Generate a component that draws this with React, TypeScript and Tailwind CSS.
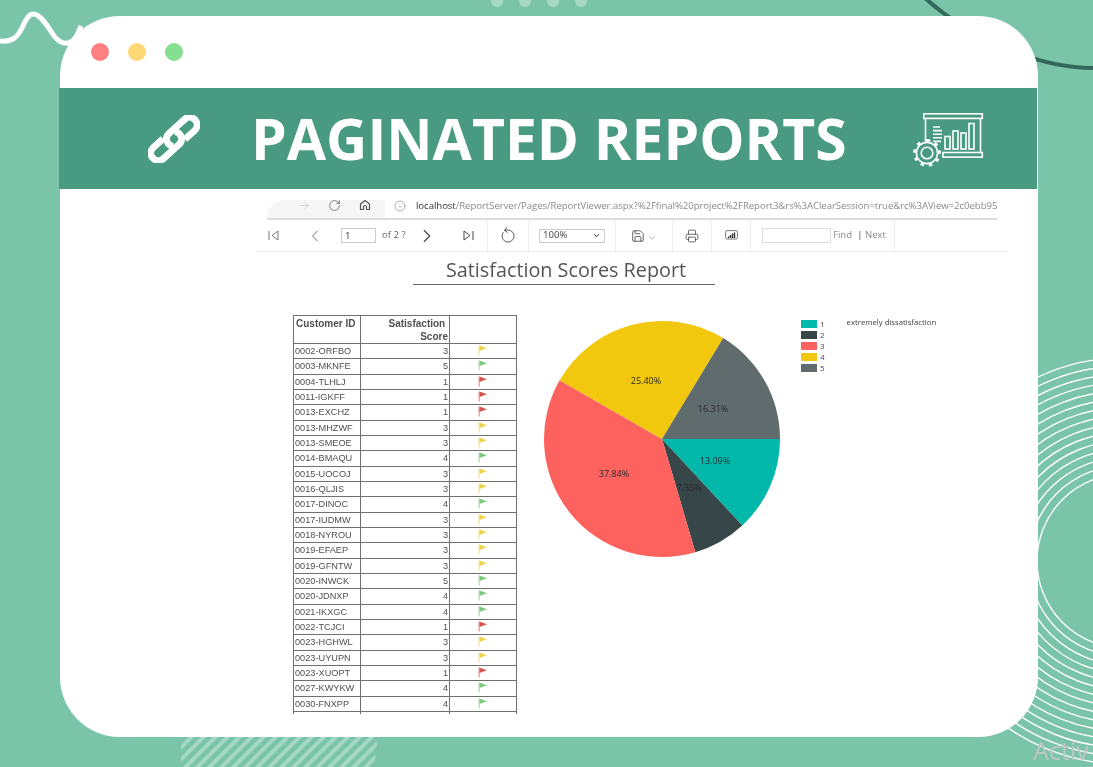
/**
 * Paginated Reports slide - report viewer screenshot inside a white window card
 */

import { ArrowRight, ChevronDown, ChevronLeft, ChevronRight, Info, Printer, RotateCcw, RotateCw, Save } from 'lucide-react';

const rows: [string, number][] = [
  ['0002-ORFBO', 3],
  ['0003-MKNFE', 5],
  ['0004-TLHLJ', 1],
  ['0011-IGKFF', 1],
  ['0013-EXCHZ', 1],
  ['0013-MHZWF', 3],
  ['0013-SMEOE', 3],
  ['0014-BMAQU', 4],
  ['0015-UOCOJ', 3],
  ['0016-QLJIS', 3],
  ['0017-DINOC', 4],
  ['0017-IUDMW', 3],
  ['0018-NYROU', 3],
  ['0019-EFAEP', 3],
  ['0019-GFNTW', 3],
  ['0020-INWCK', 5],
  ['0020-JDNXP', 4],
  ['0021-IKXGC', 4],
  ['0022-TCJCI', 1],
  ['0023-HGHWL', 3],
  ['0023-UYUPN', 3],
  ['0023-XUOPT', 1],
  ['0027-KWYKW', 4],
  ['0030-FNXPP', 4],
];

const slices = [
  { label: '1', pct: 13.09, color: '#01b8aa', text: '13.09%', tx: 53, ty: 23 },
  { label: '2', pct: 7.35, color: '#374649', text: '7.35%', tx: 27, ty: 50 },
  { label: '3', pct: 37.84, color: '#fd625e', text: '37.84%', tx: -48, ty: 36 },
  { label: '4', pct: 25.4, color: '#f2c80f', text: '25.40%', tx: -16, ty: -57 },
  { label: '5', pct: 16.31, color: '#5f6b6d', text: '16.31%', tx: 51, ty: -29 },
];

function slicePath(startPct: number, pct: number, r: number) {
  const a0 = (startPct / 100) * Math.PI * 2;
  const a1 = ((startPct + pct) / 100) * Math.PI * 2;
  const large = pct > 50 ? 1 : 0;
  return `M0 0 L${r * Math.cos(a0)} ${r * Math.sin(a0)} A${r} ${r} 0 ${large} 1 ${r * Math.cos(a1)} ${r * Math.sin(a1)} Z`;
}

function Flag({ score }: { score: number }) {
  const color = score === 1 ? '#d9534f' : score === 3 ? '#ecd54e' : '#7fc97f';
  return (
    <svg width="10" height="11" viewBox="0 0 10 11">
      <rect x="0.5" y="0.5" width="1.3" height="10" fill={color} opacity="0.6" />
      <path d="M1.5 0.5 L9 3.2 L1.5 6 Z" fill={color} />
    </svg>
  );
}

function Backdrop() {
  const rings = Array.from({ length: 15 }, (_, i) => 87 + i * 8.3);
  return (
    <svg className="absolute inset-0" width="1093" height="767" viewBox="0 0 1093 767">
      <defs>
        <pattern id="stripes" width="8.5" height="8.5" patternUnits="userSpaceOnUse" patternTransform="rotate(45)">
          <rect width="4" height="8.5" fill="#a5d9c6" />
        </pattern>
      </defs>
      {[497, 525, 553, 581].map((x) => (
        <circle key={x} cx={x} cy="1" r="6" fill="#a8d9c7" />
      ))}
      <path d="M925 -2 C960 30 1030 68 1093 68" fill="none" stroke="#33695a" strokeWidth="4" />
      {rings.map((r) => (
        <circle key={r} cx="1124" cy="561" r={r} fill="none" stroke="#ffffff" strokeWidth="1.4" />
      ))}
      <path d="M181 737 H378 L374 767 H181 Z" fill="url(#stripes)" />
    </svg>
  );
}

function LinkIcon() {
  return (
    <svg width="52" height="48" viewBox="-26 -24 52 48" fill="none" stroke="#ffffff" strokeWidth="6.8" className="shrink-0">
      <g transform="rotate(-42)">
        <path d="M-8 -7.5 H-21 A7.5 7.5 0 0 0 -21 7.5 H0 A7.5 7.5 0 0 0 5.5 -5" />
        <path d="M8 7.5 H21 A7.5 7.5 0 0 0 21 -7.5 H0 A7.5 7.5 0 0 0 -5.5 5" />
      </g>
    </svg>
  );
}

function ReportIcon() {
  return (
    <svg width="72" height="56" viewBox="0 0 72 56" fill="none" stroke="#ffffff" strokeWidth="1.6">
      <rect x="10.8" y="1.8" width="58.5" height="4.6" />
      <path d="M12.5 6.4 V28 M67.5 6.4 V40.5" />
      <rect x="30" y="40.5" width="39.3" height="4.6" />
      <path d="M20 15 H27 M20 18.6 H29 M20 22.2 H29 M20 25.8 H29 M20 29.4 H28" />
      <rect x="32" y="24.5" width="5" height="12.5" />
      <rect x="40" y="19" width="5" height="18" />
      <rect x="48" y="21" width="5" height="16" />
      <rect x="56" y="11.5" width="5" height="25.5" />
      <circle cx="14" cy="41" r="5.8" />
      <circle cx="14" cy="41" r="10.6" />
      <path strokeWidth="3" strokeDasharray="3.4 4.9" d="M14 28.6 A12.4 12.4 0 1 1 13.99 28.6" />
    </svg>
  );
}

function FirstIcon() {
  return (
    <svg width="11" height="11" viewBox="0 0 11 11" fill="none" stroke="#777777" strokeWidth="1">
      <path d="M1 1 V10 M10 1 L4 5.5 L10 10 Z" />
    </svg>
  );
}

function LastIcon() {
  return (
    <svg width="11" height="11" viewBox="0 0 11 11" fill="none" stroke="#444444" strokeWidth="1">
      <path d="M10 1 V10 M1 1 L7 5.5 L1 10 Z" />
    </svg>
  );
}

function HomeIcon() {
  return (
    <svg width="12" height="12" viewBox="0 0 12 12" fill="none" stroke="#555555" strokeWidth="1.2">
      <path d="M1.5 10.5 V5 L6 1.5 L10.5 5 V10.5 H7.5 V8 A1.5 1.5 0 0 0 4.5 8 V10.5 Z" strokeLinejoin="round" />
    </svg>
  );
}

function ChartIcon() {
  return (
    <svg width="13" height="11" viewBox="0 0 13 11" fill="none">
      <rect x="0.6" y="0.6" width="11.8" height="8.4" rx="1.5" stroke="#777777" />
      <path d="M3.5 8 V6.5 M5.5 8 V5 M7.5 8 V3.5 M9.5 8 V2.5" stroke="#333333" strokeWidth="1.4" />
    </svg>
  );
}

function BrowserBar() {
  return (
    <div className="ml-[9px] w-[730px] h-[20px] flex border-b-2 border-[#dcdcdc] overflow-hidden">
      <div className="w-[118px] h-[18px] rounded-tl-[30px] bg-[#f6f6f6] flex items-start shrink-0">
        <ArrowRight size={13} strokeWidth={1.2} className="ml-[31px] -mt-[1px] text-[#c4c4c4]" />
        <RotateCw size={13} strokeWidth={1.3} className="ml-[17px] -mt-[1px] text-[#555555]" />
        <span className="ml-[18px] -mt-[1px]">
          <HomeIcon />
        </span>
      </div>
      <div className="flex-1 flex items-start min-w-0">
        <Info size={12} strokeWidth={1} className="ml-[9px] text-[#666666] shrink-0" />
        <span className="ml-[10px] -mt-[1px] leading-[13px] font-['Open_Sans',sans-serif] text-[9.6px] tracking-[-0.05px] whitespace-nowrap text-[#8a8a8a]">
          <span className="text-[#333333]">localhost</span>
          /ReportServer/Pages/ReportViewer.aspx?%2Ffinal%20project%2FReport3&amp;rs%3AClearSession=true&amp;rc%3AView=2c0ebb95
        </span>
      </div>
    </div>
  );
}

function Toolbar() {
  const section = 'h-full flex items-center border-r border-[#eeeeee] shrink-0';
  return (
    <div className="w-[749px] h-[32px] flex border-b border-[#ececec] font-['Open_Sans',sans-serif] text-[9.6px] text-[#666666]">
      <div className={`${section} w-[230px]`}>
        <span className="ml-[10px]">
          <FirstIcon />
        </span>
        <ChevronLeft size={20} strokeWidth={1.1} className="ml-[26px] text-[#666666]" />
        <div className="ml-[16px] w-[35px] h-[15px] border border-[#cccccc] pl-[3px] leading-[13px] text-[#333333]">1</div>
        <span className="ml-[6px]">of 2 ?</span>
        <ChevronRight size={22} strokeWidth={1.2} className="ml-[10px] text-[#444444]" />
        <span className="ml-[25px]">
          <LastIcon />
        </span>
      </div>
      <div className={`${section} w-[41px] justify-center`}>
        <RotateCcw size={16} strokeWidth={1.2} className="rotate-[35deg] text-[#444444]" />
      </div>
      <div className={`${section} w-[87px] pl-[10px]`}>
        <div className="w-[66px] h-[14px] border border-[#cccccc] flex items-center justify-between px-[3px] text-[#444444]">
          <span>100%</span>
          <ChevronDown size={9} strokeWidth={2.5} className="text-[#222222]" />
        </div>
      </div>
      <div className={`${section} w-[57px] pl-[15px] gap-[2px]`}>
        <Save size={14} strokeWidth={1.4} className="text-[#444444]" />
        <ChevronDown size={10} strokeWidth={1.2} className="mt-[5px] text-[#666666]" />
      </div>
      <div className={`${section} w-[39px] justify-center`}>
        <Printer size={14} strokeWidth={1.3} className="text-[#444444]" />
      </div>
      <div className={`${section} w-[39px] justify-center`}>
        <ChartIcon />
      </div>
      <div className={`${section} w-[144px] pl-[11px]`}>
        <div className="w-[69px] h-[15px] border border-[#dddddd]" />
        <span className="ml-[2px] text-[#8a8a8a]">Find</span>
        <span className="ml-[5px] text-[#8a8a8a]">
          <span className="text-[#444444]">|</span> Next
        </span>
      </div>
    </div>
  );
}

function ScoreTable() {
  const line = 'border-[#707070]';
  return (
    <div className={`w-[224px] shrink-0 border-x ${line} font-['Liberation_Sans',sans-serif] text-[9.2px] text-[#505050]`}>
      <div className={`h-[29px] flex border-y ${line} font-bold text-[10px]`}>
        <div className={`w-[67px] border-r ${line} pl-[2px] pt-[2px] leading-[12px]`}>Customer ID</div>
        <div className={`w-[89px] border-r ${line} pr-[1px] pt-[1px] leading-[13px] text-right`}>
          Satisfaction&nbsp;
          <br />
          Score
        </div>
        <div className="flex-1" />
      </div>
      {rows.map(([id, score]) => (
        <div key={id} className={`h-[15.33px] flex items-center border-b ${line}`}>
          <div className={`w-[67px] h-full border-r ${line} pl-[1px] leading-[14px]`}>{id}</div>
          <div className={`w-[89px] h-full border-r ${line} pr-[1px] leading-[14px] text-right`}>{score}</div>
          <div className="flex-1 h-full flex items-center justify-center pb-[1px]">
            <Flag score={score} />
          </div>
        </div>
      ))}
      <div className="h-[2px] flex">
        <div className={`w-[67px] border-r ${line}`} />
        <div className={`w-[89px] border-r ${line}`} />
      </div>
    </div>
  );
}

function PieChart() {
  let start = 0;
  return (
    <svg width="240" height="238" viewBox="-120 -119 240 238" className="shrink-0">
      {slices.map((s) => {
        const d = slicePath(start, s.pct, 118);
        start += s.pct;
        return <path key={s.label} d={d} fill={s.color} />;
      })}
      {slices.map((s) => (
        <text
          key={s.label}
          x={s.tx}
          y={s.ty}
          textAnchor="middle"
          dominantBaseline="middle"
          fontFamily="Open Sans, sans-serif"
          fontSize="9"
          fill="#2a2a2a"
        >
          {s.text}
        </text>
      ))}
    </svg>
  );
}

function Legend() {
  return (
    <div className="flex font-['Open_Sans',sans-serif] text-[#444444]">
      <div className="flex flex-col gap-[3px] text-[8px]">
        {slices.map((s) => (
          <div key={s.label} className="h-[8px] flex items-center gap-[3px]">
            <span className="w-[16px] h-[8px]" style={{ backgroundColor: s.color }} />
            <span>{s.label}</span>
          </div>
        ))}
      </div>
      <div className="ml-[22px] -mt-[3px] text-[7.75px] whitespace-nowrap">extremely dissatisfaction</div>
    </div>
  );
}

export default function App() {
  return (
    <div className="relative w-[1093px] h-[767px] overflow-hidden bg-[#7ac4a9] pl-[60px] pt-[16px]">
      <Backdrop />

      <div className="relative w-[978px] h-[721px] rounded-[60px] bg-white">
        <div className="h-[72px] flex items-center pl-[31px] gap-[19px]">
          <span className="w-[18px] h-[18px] rounded-full bg-[#ff8080]" />
          <span className="w-[18px] h-[18px] rounded-full bg-[#fdd875]" />
          <span className="w-[18px] h-[18px] rounded-full bg-[#86de90]" />
        </div>

        <div className="-ml-px w-[978px] h-[101px] bg-[#489a80] flex items-center text-white">
          <span className="ml-[89px]">
            <LinkIcon />
          </span>
          <h1 className="ml-[51px] w-[594px] font-['Open_Sans',sans-serif] font-bold text-[57px] leading-none whitespace-nowrap">
            PAGINATED REPORTS
          </h1>
          <span className="ml-[68px] mt-[2px]">
            <ReportIcon />
          </span>
        </div>

        <div className="ml-[198px] pt-[11px] blur-[0.3px]">
          <BrowserBar />
          <Toolbar />
          <div className="w-[749px] h-[34px]">
            <div className="ml-[155px] w-[302px] h-[33px] border-b border-[#666666] pl-[4px] text-center font-['Open_Sans',sans-serif] text-[19.8px] leading-[35px] text-[#555555]">
              Satisfaction Scores Report
            </div>
          </div>
          <div className="flex pl-[35px] pt-[29px] h-[428px] overflow-hidden">
            <ScoreTable />
            <div className="ml-[25px] mt-[5px]">
              <PieChart />
            </div>
            <div className="ml-[19px] mt-[5px]">
              <Legend />
            </div>
          </div>
        </div>
      </div>

      {/* wave and Windows watermark */}
      <svg className="absolute left-0 top-0" width="90" height="50" viewBox="0 0 90 50" fill="none">
        <path
          d="M0 41 C12 42 17 38 22 28 C26 19 29 14 33 14 C40 14 47 25 52 33 C57 41 62 44 68 43 C75 42 78 33 81 26"
          stroke="#ffffff"
          strokeWidth="5"
        />
      </svg>
      <span className="absolute left-[1033px] top-[732px] font-['Open_Sans',sans-serif] text-[25px] text-[#bcc7c2] whitespace-nowrap">
        Activ
      </span>
    </div>
  );
}
